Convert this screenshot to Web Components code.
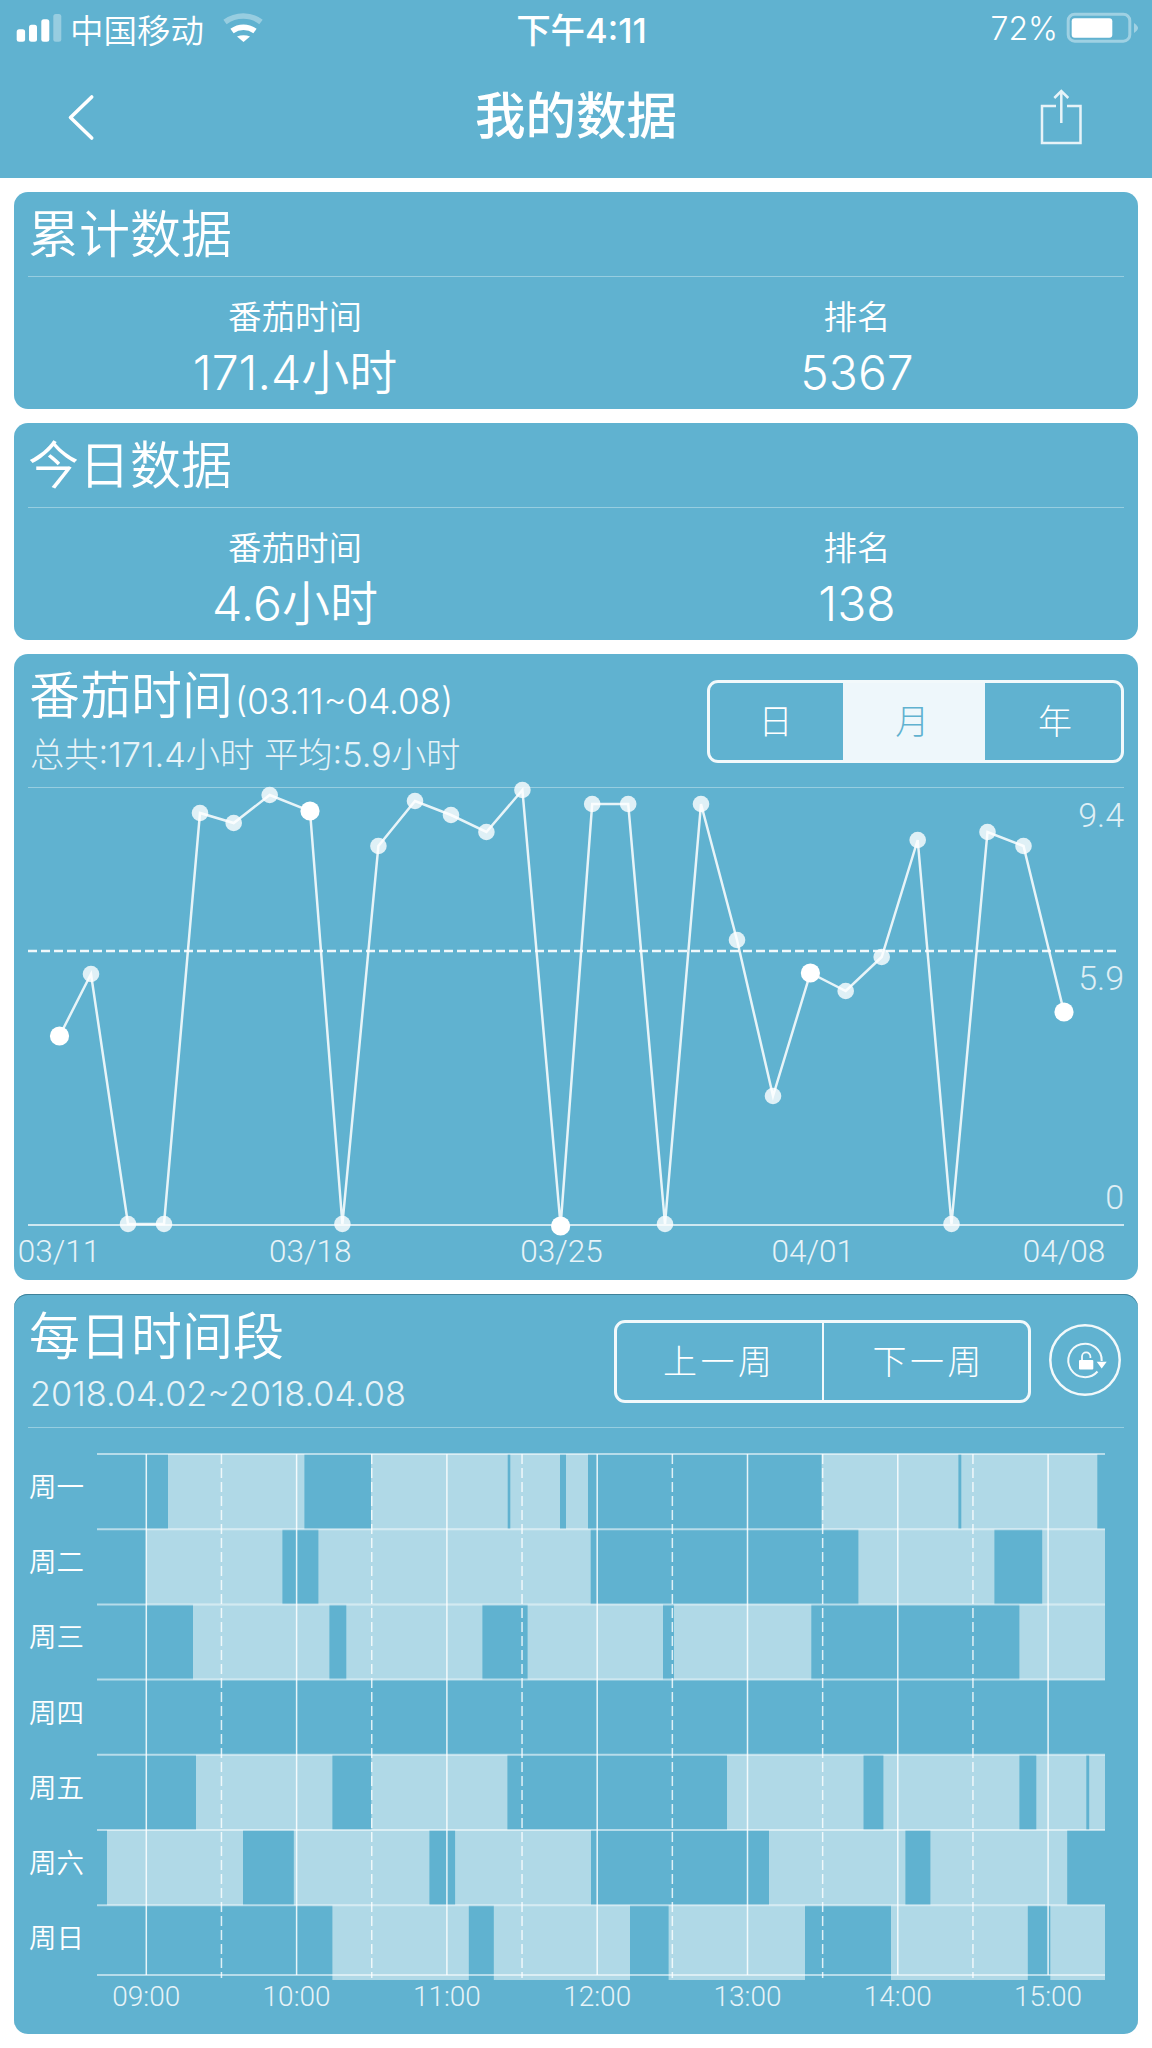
<!DOCTYPE html>
<html lang="zh">
<head>
<meta charset="utf-8">
<title>我的数据</title>
<style>
    html, body { margin: 0; background: #fff; }
    body {
        width: 1152px;
        height: 2048px;
        overflow: hidden;
        color: #fff;
        font-family: Inter, "Noto Sans CJK SC", sans-serif;
        font-weight: 300;
    }
    main {
        display: flex;
        flex-direction: column;
        gap: 14px;
        padding: 14px;
    }
</style>
</head>
<body>
<status-bar></status-bar>
<nav-bar>我的数据</nav-bar>
<main>
    <stat-card heading="累计数据" time="171.4小时" rank="5367"></stat-card>
    <stat-card heading="今日数据" time="4.6小时" rank="138"></stat-card>
    <chart-card heading="番茄时间" note="(03.11~04.08)" sub="总共:171.4小时 平均:5.9小时">
        <seg-control slot="tools" active="1" items="日,月,年" width="417"></seg-control>
        <line-chart></line-chart>
    </chart-card>
    <chart-card heading="每日时间段" sub="2018.04.02~2018.04.08" topline>
        <seg-control slot="tools" items="上一周,下一周" width="417" divider></seg-control>
        <rotate-button slot="tools"></rotate-button>
        <time-chart></time-chart>
    </chart-card>
</main>

<script>
const BLUE = "#60b2d0";

class StatusBar extends HTMLElement {
    constructor() {
        super();
        this.attachShadow({mode: 'open'});
        this.shadowRoot.innerHTML = `
<style>
    :host {
        display: grid;
        grid-template-columns: 1fr auto 1fr;
        align-items: center;
        height: 56px;
        background: ${BLUE};
        font-size: 33.5px;
        font-weight: 350;
    }
    .left { display: flex; align-items: center; padding-left: 16px; }
    .left span { margin-left: 8px; }
    .left svg + span + svg { margin-left: 19px; }
    .time { padding-left: 11px; font-size: 34.5px; font-weight: 500; }
    .right { display: flex; align-items: center; justify-content: flex-end; padding-right: 14px; font-size: 32px; }
    .right span { margin-right: 8px; }
    svg { display: block; }
</style>
<div class="left">
    <svg width="46" height="56" viewBox="16 0 46 56" fill="#fff">
        <rect x="16.7" y="29.3" width="8.4" height="12.4" rx="2.5"/>
        <rect x="29" y="24.7" width="8" height="17" rx="2.5"/>
        <rect x="41.3" y="19.3" width="8" height="22.4" rx="2.5"/>
        <rect x="53.3" y="14" width="8" height="27.7" rx="2.5" opacity=".35"/>
    </svg>
    <span>中国移动</span>
    <svg width="40" height="56" viewBox="222 0 40 56" fill="none" stroke="#fff" stroke-width="5.5">
        <path d="M224 22 C235 14 250 14 260 22" opacity=".35"/>
        <path d="M231 31 C238 26 247 26 254 31"/>
        <path d="M236 36.6 C240 34.8 245 34.8 249 36.6 L242.5 42 Z" fill="#fff" stroke="none"/>
    </svg>
</div>
<div class="time">下午4:11</div>
<div class="right">
    <span>72%</span>
    <svg width="72" height="56" viewBox="1066 0 72 56">
        <rect x="1068.2" y="14.2" width="61.6" height="27" rx="6.5" fill="none" stroke="#fff" stroke-width="3" opacity=".4"/>
        <rect x="1071.7" y="18.3" width="40.6" height="19.4" rx="3" fill="#fff"/>
        <path d="M1134 23 C1137 25 1138 27 1138 28 C1138 29 1137 31 1134 33 Z" fill="#fff" opacity=".4"/>
    </svg>
</div>`;
    }
}

class NavBar extends HTMLElement {
    constructor() {
        super();
        this.attachShadow({mode: 'open'});
        this.shadowRoot.innerHTML = `
<style>
    :host {
        display: grid;
        grid-template-columns: 1fr auto 1fr;
        align-items: center;
        height: 122px;
        background: ${BLUE};
        font-size: 50.5px;
        font-weight: 500;
    }
    .title { padding-bottom: 10px; }
    .back { margin-left: 66px; }
    .share { justify-self: end; margin-right: 68px; }
    svg { display: block; }
</style>
<svg class="back" width="30" height="60" viewBox="66 86 30 60" fill="none" stroke="#fff" stroke-width="3.6" stroke-linecap="round" stroke-linejoin="round">
    <path d="M91.7 96 L70.5 116.5 L91.7 137"/>
</svg>
<div class="title"><slot></slot></div>
<svg class="share" width="44" height="60" viewBox="1040 86 44 60" fill="none" stroke="#fff" stroke-width="2.5" opacity=".85">
    <path d="M1056 105 H1042 V142 H1080.5 V105 H1067"/>
    <path d="M1061.3 122 V90.5 M1054.3 97 L1061.3 90 L1068.3 97"/>
</svg>`;
    }
}

class BaseCard extends HTMLElement {
    baseStyle() {
        return `
    :host {
        display: block;
        background: ${BLUE};
        border-radius: 14px;
    }
    .head {
        display: flex;
        justify-content: space-between;
        margin: 0 14px;
        border-bottom: 1.5px solid rgba(255,255,255,.35);
        box-sizing: border-box;
    }
    h2 {
        margin: 0;
        font-size: 51px;
        font-weight: 350;
        line-height: 60px;
    }`;
    }
}

class StatItem extends HTMLElement {
    constructor() {
        super();
        this.attachShadow({mode: 'open'});
        this.shadowRoot.innerHTML = `
<style>
    :host { display: flex; flex-direction: column; align-items: center; }
    .label { font-size: 33.5px; font-weight: 350; line-height: 40px; margin-top: 20px; }
    .value { font-size: 48px; font-weight: 350; line-height: 56px; margin-top: 8px; }
</style>
<div class="label"><slot name="label"></slot></div>
<div class="value"><slot></slot></div>`;
    }
}

class StatCard extends BaseCard {
    constructor() {
        super();
        this.attachShadow({mode: 'open'});
    }

    connectedCallback() {
        this.shadowRoot.innerHTML = `
<style>
    ${this.baseStyle()}
    :host { height: 217px; }
    .head { height: 85px; padding: 13px 0 0; }
    .cols { display: grid; grid-template-columns: 1fr 1fr; }
</style>
<div class="head"><h2>${this.getAttribute("heading")}</h2></div>
<div class="cols">
    <stat-item><span slot="label">番茄时间</span>${this.getAttribute("time")}</stat-item>
    <stat-item><span slot="label">排名</span>${this.getAttribute("rank")}</stat-item>
</div>`;
    }
}

class ChartCard extends BaseCard {
    constructor() {
        super();
        this.attachShadow({mode: 'open'});
    }

    connectedCallback() {
        const note = this.getAttribute("note");
        const top = this.hasAttribute("topline") ? 13 : 12;
        const gap = this.hasAttribute("topline") ? 7 : 4;
        this.shadowRoot.innerHTML = `
<style>
    ${this.baseStyle()}
    :host { ${this.hasAttribute("topline") ? "box-shadow: inset 0 1px 0 #3f8199;" : ""} }
    .head { height: 134px; padding-left: 1px; }
    .text { padding-top: ${top}px; }
    h2 small { font-size: 35px; font-weight: 300; margin-left: 2px; }
    .sub { font-size: 34.3px; line-height: 40px; margin-top: ${gap}px; opacity: .85; padding-left: 1px; white-space: nowrap; }
    .tools { display: flex; gap: 18px; align-items: flex-start; padding-top: 26px; }
</style>
<div class="head">
    <div class="text">
        <h2>${this.getAttribute("heading")}${note ? `<small>${note}</small>` : ""}</h2>
        <div class="sub">${this.getAttribute("sub")}</div>
    </div>
    <div class="tools"><slot name="tools"></slot></div>
</div>
<slot></slot>`;
    }
}

class SegControl extends HTMLElement {
    constructor() {
        super();
        this.attachShadow({mode: 'open'});
    }

    connectedCallback() {
        const active = this.getAttribute("active");
        const items = this.getAttribute("items").split(",");
        const buttons = items.map((item, i) =>
            `<div class="${String(i) === active ? "on" : ""}">${item}</div>`).join("");
        const divided = this.hasAttribute("divider");
        this.shadowRoot.innerHTML = `
<style>
    :host {
        display: flex;
        box-sizing: border-box;
        width: ${this.getAttribute("width")}px;
        height: 83px;
        border: 3px solid #f2f9fb;
        border-radius: 11px;
        font-size: 34px;
        overflow: hidden;
    }
    div {
        flex: 1;
        display: flex;
        align-items: center;
        justify-content: center;
        letter-spacing: 3.5px;
        padding-bottom: 4px;
    }
    div + div { border-left: ${divided ? "2.5px solid #f2f9fb" : "0"}; }
    ${divided ? "div:first-child { flex: none; width: 204px; }" : ""}
    .on { background: #eef7fb; color: ${BLUE}; flex: none; width: 142px; margin: 0 1.5px 0 -1.5px; }
    div:last-child { text-indent: 6px; }
</style>
${buttons}`;
    }
}

class RotateButton extends HTMLElement {
    constructor() {
        super();
        this.attachShadow({mode: 'open'});
        this.shadowRoot.innerHTML = `
<style>
    :host { display: block; margin: 4px 3px 0 0; }
    svg { display: block; }
</style>
<svg width="72" height="72" viewBox="1049 1324 72 72" fill="none" stroke="#f2f9fb" stroke-width="2.5">
    <circle cx="1085" cy="1360" r="34.7"/>
    <path d="M1101.7 1361 A16.7 16.7 0 1 0 1097.5 1371.5" stroke-width="2"/>
    <path d="M1096.7 1361.7 H1106.7 L1101.7 1368.5 Z" fill="#fff" stroke="none"/>
    <rect x="1079" y="1360" width="14.3" height="9.5" rx="1" fill="#fff" stroke="none"/>
    <path d="M1082 1360 V1356.5 A4.2 4.2 0 0 1 1090.4 1356.5 V1358" stroke-width="1.8"/>
</svg>`;
    }
}

// page x, page y, 1 = big white dot
const POINTS = [
    [59.5, 1036, 1], [91, 974], [128, 1224], [164, 1224], [200, 813], [233.7, 823], [269.7, 795],
    [310, 811, 1], [342.4, 1224], [378.4, 846], [415, 801], [451, 815], [486.4, 832], [522.4, 790],
    [560.6, 1226, 1], [592.2, 804], [628.2, 804], [665, 1224], [701, 804], [737, 940], [773, 1096],
    [810.4, 973, 1], [845.7, 991], [881.7, 957], [917.7, 840], [951.5, 1224], [987.5, 832], [1023.5, 846],
    [1064, 1012, 1]
];

class LineChart extends HTMLElement {
    constructor() {
        super();
        this.attachShadow({mode: 'open'});
        const line = POINTS.map(p => p[0] + "," + p[1]).join(" ");
        const dots = POINTS.map(p => p[2]
            ? `<circle cx="${p[0]}" cy="${p[1]}" r="9.6" fill="#fff"/>`
            : `<circle cx="${p[0]}" cy="${p[1]}" r="8.3" fill="#fff" fill-opacity=".8"/>`).join("");
        const dates = ["03/11", "03/18", "03/25", "04/01", "04/08"].map(d => `<span>${d}</span>`).join("");
        this.shadowRoot.innerHTML = `
<style>
    :host {
        display: block;
        position: relative;
        height: 492px;
        font-family: Roboto, sans-serif;
    }
    svg { display: block; overflow: visible; }
    .dates {
        display: flex;
        justify-content: space-between;
        padding: 1px 29px 0 0;
        font-size: 31.5px;
        line-height: 30px;
        opacity: .85;
    }
    .dates span { width: 90px; text-align: center; }
    .y {
        position: absolute;
        right: 14px;
        font-size: 34px;
        line-height: 36px;
        opacity: .8;
    }
</style>
<svg width="1124" height="448" viewBox="14 788 1124 448" fill="none">
    <path d="M28 1225 H1124" stroke="#fff" stroke-opacity=".7" stroke-width="2"/>
    <path d="M28 951 H1118" stroke="#fff" stroke-opacity=".9" stroke-width="2.5" stroke-dasharray="9 4"/>
    <polyline points="${line}" stroke="#fff" stroke-opacity=".85" stroke-width="2.5"/>
    ${dots}
</svg>
<div class="dates">${dates}</div>
<div class="y" style="top:9px">9.4</div>
<div class="y" style="top:172px">5.9</div>
<div class="y" style="top:391px">0</div>`;
    }
}

// light spans [from, to] in page x, one list per weekday
const SPANS = [
    [[168, 304.4], [371, 507.7], [510.3, 560], [566, 588], [821.6, 958.4], [961.3, 1097.3]],
    [[146.3, 282.4], [318.4, 590.7], [858.4, 994.4], [1042.2, 1105]],
    [[193, 329.4], [346.3, 482.4], [527.6, 663], [674, 811.3], [1019.4, 1105]],
    [],
    [[196, 332.4], [371.3, 507.4], [727, 863.5], [883.4, 1019.4], [1036.3, 1086.3], [1089.2, 1105]],
    [[107, 243], [293.8, 429.4], [455.1, 591], [769, 905.4], [930.4, 1067.2]],
    [[332.4, 468.8], [493.8, 630], [668.6, 805], [891, 1027.8], [1050.3, 1105]]
];

class TimeChart extends HTMLElement {
    constructor() {
        super();
        this.attachShadow({mode: 'open'});

        const top = 1454, rowH = 75.2, bottom = 1975;
        const rows = SPANS.map((spans, i) => spans.map(s => {
            const y = top + i * rowH;
            const h = i === 6 ? 1980 - y : rowH;
            return `<rect x="${s[0]}" y="${y}" width="${s[1] - s[0]}" height="${h}" fill="#b0d9e7"/>`;
        }).join("")).join("");

        let lines = "";
        for (let i = 0; i < 7; i++) {
            lines += `<path d="M97 ${top + i * rowH} H1105" stroke="#fff" stroke-opacity=".55" stroke-width="2"/>`;
        }
        lines += `<path d="M97 ${bottom} H1105" stroke="#fff" stroke-opacity=".55" stroke-width="2"/>`;
        for (let i = 0; i < 7; i++) {
            const x = 146.3 + i * 150.3;
            lines += `<path d="M${x} ${top} V${bottom}" stroke="#fff" stroke-opacity=".85" stroke-width="1.5"/>`;
            if (i < 6) {
                lines += `<path d="M${x + 75.15} ${top} V1978" stroke="#fff" stroke-opacity=".8" stroke-width="1.5" stroke-dasharray="10 4"/>`;
            }
        }

        const days = "一二三四五六日".split("").map(d => `<span>周${d}</span>`).join("");
        const hours = ["09:00", "10:00", "11:00", "12:00", "13:00", "14:00", "15:00"].map(h => `<span>${h}</span>`).join("");

        this.shadowRoot.innerHTML = `
<style>
    :host { display: block; padding-top: 22px; }
    .plot { display: flex; }
    .days {
        display: flex;
        flex-direction: column;
        width: 83px;
        padding-left: 15px;
        box-sizing: border-box;
        font-size: 27.5px;
        font-weight: 350;
    }
    .days span { height: 75.2px; line-height: 75.2px; white-space: nowrap; }
    svg { display: block; }
    .hours {
        display: flex;
        margin-left: 57.15px;
        padding-bottom: 22px;
        font-family: Roboto, sans-serif;
        font-size: 28px;
        line-height: 30px;
        opacity: .85;
    }
    .hours span { width: 150.3px; text-align: center; }
</style>
<div class="plot">
    <div class="days">${days}</div>
    <svg width="1010" height="532" viewBox="97 1450 1010 532" fill="none">${rows}${lines}</svg>
</div>
<div class="hours">${hours}</div>`;
    }
}

customElements.define("status-bar", StatusBar);
customElements.define("nav-bar", NavBar);
customElements.define("stat-item", StatItem);
customElements.define("stat-card", StatCard);
customElements.define("chart-card", ChartCard);
customElements.define("seg-control", SegControl);
customElements.define("rotate-button", RotateButton);
customElements.define("line-chart", LineChart);
customElements.define("time-chart", TimeChart);
</script>
</body>
</html>
